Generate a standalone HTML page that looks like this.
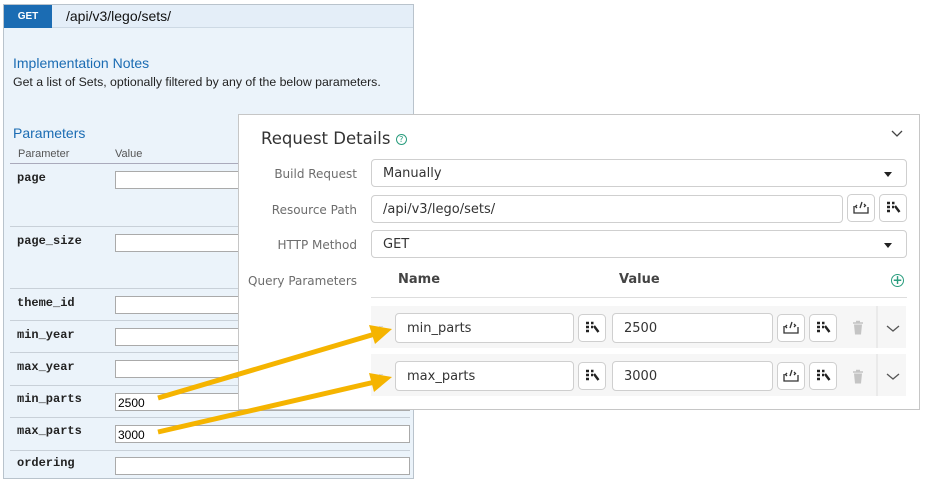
<!DOCTYPE html>
<html><head><meta charset="utf-8"><style>
*{box-sizing:border-box;margin:0;padding:0}
body{width:936px;height:485px;background:#fff;position:relative;overflow:hidden;font-family:"Liberation Sans",sans-serif}
.a{position:absolute}
#L{left:3px;top:4px;width:411px;height:475px;background:#ebf3fa;border:1px solid #b9c3cc}
.lbl{font-family:"Liberation Mono",monospace;font-weight:bold;font-size:12px;color:#222;left:17px}
.inp{background:#fff;border:1px solid #aaa;height:18px;left:115px;width:295px;font-size:12px;padding:2px 2px;color:#000}
.hl{left:10px;width:400px;height:1px;background:#c8d0d8}
#R{left:238px;top:114px;width:682px;height:296px;background:#fff;border:1px solid #c6c6c6}
.r{font-family:"DejaVu Sans",sans-serif;}
.rl{font-size:12px;color:#6d6d6d;text-align:right;width:200px}
.box{border:1px solid #cfcfcf;border-radius:4px;background:#fff;font-size:13px;color:#333;padding-left:11px;display:flex;align-items:center}
.btn{border:1px solid #cfcfcf;border-radius:4px;background:#fff;width:28px;height:28px;display:flex;align-items:center;justify-content:center}
.car{position:absolute;right:14px;top:12px;border-left:4px solid transparent;border-right:4px solid transparent;border-top:5px solid #222}
</style></head><body>
<div id="L" class="a">
 <div class="a" style="left:0;top:0;width:409px;height:23px;background:#e4eef8;border-bottom:1px solid #cdd9e4"></div>
 <div class="a" style="left:0;top:0;width:48px;height:23px;background:#1b6cb3;color:#fff;font-size:10px;font-weight:bold;line-height:23px;text-align:center">GET</div>
 <div class="a" style="left:62px;top:3px;font-size:14px;color:#111">/api/v3/lego/sets/</div>
 <div class="a" style="left:9px;top:50px;font-size:14px;color:#1b6cb3">Implementation Notes</div>
 <div class="a" style="left:9px;top:70px;font-size:12.3px;color:#222">Get a list of Sets, optionally filtered by any of the below parameters.</div>
 <div class="a" style="left:9px;top:120px;font-size:14px;color:#1b6cb3">Parameters</div>
 <div class="a" style="left:14px;top:143px;font-size:11px;color:#555">Parameter</div>
 <div class="a" style="left:111px;top:143px;font-size:11px;color:#555">Value</div>
</div>
<div class="a hl" style="top:163px;background:#aab"></div>
<div class="a lbl" style="top:171px">page</div><div class="a inp" style="top:171px"></div>
<div class="a hl" style="top:226px"></div>
<div class="a lbl" style="top:234px">page_size</div><div class="a inp" style="top:234px"></div>
<div class="a hl" style="top:288px"></div>
<div class="a lbl" style="top:296px">theme_id</div><div class="a inp" style="top:296px"></div>
<div class="a hl" style="top:320px"></div>
<div class="a lbl" style="top:328px">min_year</div><div class="a inp" style="top:328px"></div>
<div class="a hl" style="top:352px"></div>
<div class="a lbl" style="top:360px">max_year</div><div class="a inp" style="top:360px"></div>
<div class="a hl" style="top:385px"></div>
<div class="a lbl" style="top:392px">min_parts</div><div class="a inp" style="top:393px">2500</div>
<div class="a hl" style="top:417px"></div>
<div class="a lbl" style="top:424px">max_parts</div><div class="a inp" style="top:425px">3000</div>
<div class="a hl" style="top:450px"></div>
<div class="a lbl" style="top:456px">ordering</div><div class="a inp" style="top:457px"></div>

<div id="R" class="a r">
 <div class="a" style="left:22px;top:14px;font-size:16.5px;color:#333">Request Details <span style="display:inline-block;width:11px;height:11px;border:1.3px solid #2a9d7e;border-radius:50%;font-size:8px;color:#2a9d7e;text-align:center;line-height:9px;vertical-align:2px">?</span></div>
 <svg class="a" style="left:652px;top:15px" width="12" height="8"><path d="M1 1l5 5 5-5" stroke="#444" fill="none" stroke-width="1.3"/></svg>
 <div class="a rl" style="left:-82px;top:52px">Build Request</div>
 <div class="a box" style="left:132px;top:44px;width:536px;height:28px">Manually<span class="car"></span></div>
 <div class="a rl" style="left:-82px;top:88px">Resource Path</div>
 <div class="a box" style="left:132px;top:80px;width:472px;height:28px">/api/v3/lego/sets/</div>
 <div class="a rl" style="left:-82px;top:123px">HTTP Method</div>
 <div class="a box" style="left:132px;top:115px;width:536px;height:28px">GET<span class="car"></span></div>
 <div class="a rl" style="left:-82px;top:159px">Query Parameters</div>
 <div class="a" style="left:159px;top:157px;font-size:13px;font-weight:bold;color:#444">Name</div>
 <div class="a" style="left:380px;top:157px;font-size:13px;font-weight:bold;color:#444">Value</div>
 <div class="a" style="left:652px;top:159px;width:13px;height:13px;border:1.4px solid #2a9d7e;border-radius:50%;color:#2a9d7e;font-size:12px;line-height:10px;text-align:center;font-weight:bold">+</div>
 <div class="a" style="left:132px;top:182px;width:536px;height:1px;background:#ddd"></div>
</div>

<div class="a" style="left:371px;top:306px;width:535px;height:42px;background:#f6f6f6"></div>
<div class="a" style="left:371px;top:354px;width:535px;height:42px;background:#f6f6f6"></div>

<div class="a r" style="left:0;top:0">
 <div class="a box" style="left:395px;top:313px;width:179px;height:30px">min_parts</div>
 <div class="a box" style="left:612px;top:313px;width:161px;height:30px">2500</div>
 <div class="a box" style="left:395px;top:361px;width:179px;height:30px">max_parts</div>
 <div class="a box" style="left:612px;top:361px;width:161px;height:30px">3000</div>
</div>
<svg class="a" style="left:0;top:0" width="936" height="485">
 <defs>
  <g id="w"><rect x="0.5" y="0.5" width="27" height="27" rx="4" fill="#fff" stroke="#cfcfcf"/><path d="M8 9h3M8 13h3M8 17h3M13 9h2.5M13 13h2M16 12l4.5 6" stroke="#222" fill="none" stroke-width="2.4"/></g>
  <g id="c"><rect x="0.5" y="0.5" width="27" height="27" rx="4" fill="#fff" stroke="#cfcfcf"/><path d="M7 12v7h14v-6M10 11l-1.5 1.5 1.5 1.5M13 14l2-6M17 10l1.5 1.5-1.5 1.5" stroke="#333" fill="none" stroke-width="1.3"/></g>
  <g id="t"><path d="M-5 -5h10M-2 -6.5h4" stroke="#c4c4c4" stroke-width="1.5"/><path d="M-4 -3.5h8l-1 10h-6z" fill="#c4c4c4"/></g>
 </defs>
 <use href="#c" x="847" y="194"/><use href="#w" x="879" y="194"/>
 <use href="#w" x="578" y="314"/><use href="#c" x="777" y="314"/><use href="#w" x="809" y="314"/>
 <use href="#w" x="578" y="362"/><use href="#c" x="777" y="362"/><use href="#w" x="809" y="362"/>
 <use href="#t" x="858" y="328"/><use href="#t" x="858" y="377"/>
 <line x1="877" y1="306" x2="877" y2="348" stroke="#ddd"/><line x1="877" y1="354" x2="877" y2="396" stroke="#ddd"/>
 <path d="M887 326l6 5 6-5M887 374l6 5 6-5" stroke="#555" fill="none" stroke-width="1.3"/>
 <path d="M380 326v1M382 326v1M380 329v1M382 329v1M380 374v1M382 374v1M380 377v1M382 377v1" stroke="#bbb"/>
 <g stroke="#f5b400" stroke-width="5" fill="#f5b400">
  <line x1="158" y1="398" x2="375" y2="334"/>
  <line x1="158" y1="432" x2="375" y2="382"/>
 </g>
 <polygon points="392,329 369,325 375,344" fill="#f5b400"/>
 <polygon points="392,377 369,373 374,392" fill="#f5b400"/>
</svg>
</body></html>
